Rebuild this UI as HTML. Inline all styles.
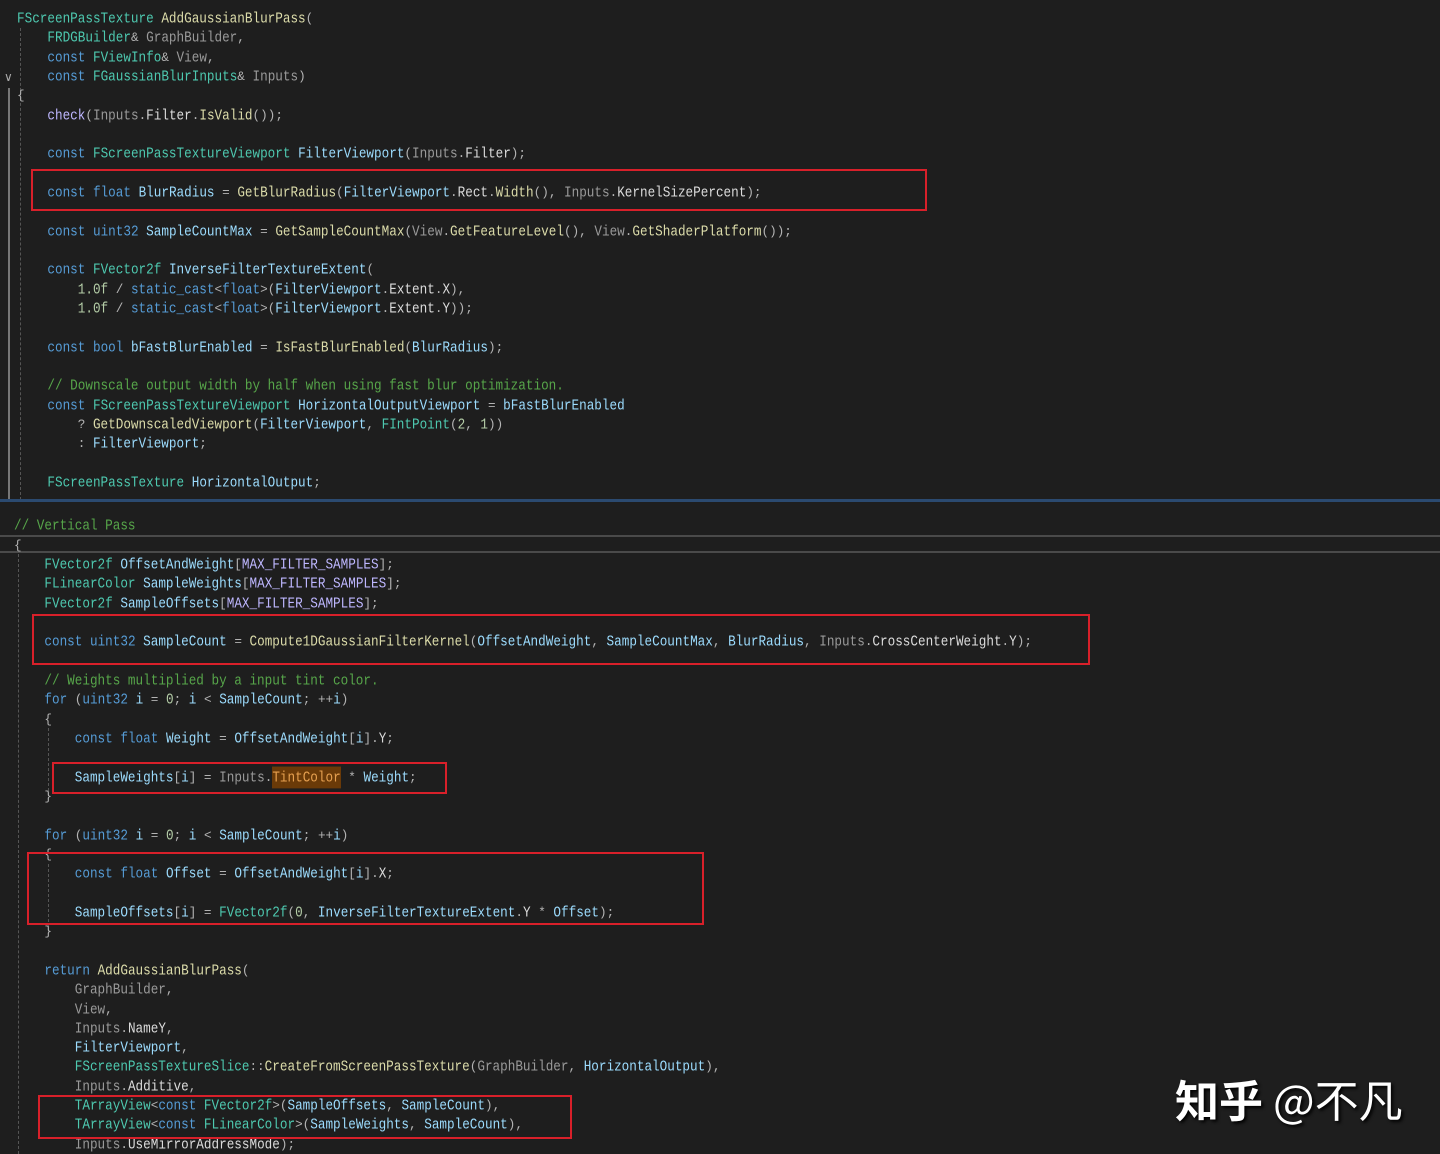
<!DOCTYPE html>
<html><head><meta charset="utf-8"><style>
html,body{margin:0;padding:0;background:#1e1e1e;width:1440px;height:1154px;overflow:hidden;position:relative}
pre{position:absolute;margin:0;font-family:"Liberation Mono",monospace;font-size:12.67px;line-height:19.33px;color:#b4b4b4;white-space:pre}
pre span{display:inline-block;transform:scaleY(1.15)}
.t{color:#4ec9b0}.k{color:#569cd6}.f{color:#dcdcaa}.v{color:#9cdcfe}.p{color:#9a9a9a}.c{color:#57a64a}.m{color:#beb7ff}.n{color:#b5cea8}.w{color:#dcdcdc}
.hl{background:#6a3a08;color:#e6a050}
.box{position:absolute;border:2px solid #d8202a;box-sizing:border-box}
.g{position:absolute;width:0;border-left:1px dashed #555}
.s{position:absolute;background:#888;width:2px}
</style></head><body>
<div class="s" style="left:8px;top:88px;height:412px;background:#777"></div>
<div class="g" style="left:20px;top:28px;height:472px"></div>
<div style="position:absolute;left:4px;top:70px;color:#aaa;font:12px 'Liberation Sans',sans-serif">&#8744;</div>
<div style="position:absolute;left:0;top:499px;width:1440px;height:3px;background:#2b4a70"></div>
<div style="position:absolute;left:0;top:535px;width:1440px;height:2px;background:#4a4a4a"></div>
<div style="position:absolute;left:0;top:551px;width:1440px;height:2px;background:#4a4a4a"></div>
<div class="g" style="left:18px;top:554px;height:600px"></div>
<div class="g" style="left:48px;top:728px;height:68px"></div>
<div class="g" style="left:48px;top:864px;height:68px"></div>
<pre style="left:17px;top:9px"><span class="t">FScreenPassTexture</span> <span class="f">AddGaussianBlurPass</span>(
    <span class="t">FRDGBuilder</span>&amp; <span class="p">GraphBuilder</span>,
    <span class="k">const</span> <span class="t">FViewInfo</span>&amp; <span class="p">View</span>,
    <span class="k">const</span> <span class="t">FGaussianBlurInputs</span>&amp; <span class="p">Inputs</span>)
{
    <span class="m">check</span>(<span class="p">Inputs</span>.<span class="w">Filter</span>.<span class="f">IsValid</span>());

    <span class="k">const</span> <span class="t">FScreenPassTextureViewport</span> <span class="v">FilterViewport</span>(<span class="p">Inputs</span>.<span class="w">Filter</span>);

    <span class="k">const</span> <span class="k">float</span> <span class="v">BlurRadius</span> = <span class="f">GetBlurRadius</span>(<span class="v">FilterViewport</span>.<span class="w">Rect</span>.<span class="f">Width</span>(), <span class="p">Inputs</span>.<span class="w">KernelSizePercent</span>);

    <span class="k">const</span> <span class="k">uint32</span> <span class="v">SampleCountMax</span> = <span class="f">GetSampleCountMax</span>(<span class="p">View</span>.<span class="f">GetFeatureLevel</span>(), <span class="p">View</span>.<span class="f">GetShaderPlatform</span>());

    <span class="k">const</span> <span class="t">FVector2f</span> <span class="v">InverseFilterTextureExtent</span>(
        <span class="n">1.0f</span> / <span class="k">static_cast</span>&lt;<span class="k">float</span>&gt;(<span class="v">FilterViewport</span>.<span class="w">Extent</span>.<span class="w">X</span>),
        <span class="n">1.0f</span> / <span class="k">static_cast</span>&lt;<span class="k">float</span>&gt;(<span class="v">FilterViewport</span>.<span class="w">Extent</span>.<span class="w">Y</span>));

    <span class="k">const</span> <span class="k">bool</span> <span class="v">bFastBlurEnabled</span> = <span class="f">IsFastBlurEnabled</span>(<span class="v">BlurRadius</span>);

    <span class="c">// Downscale output width by half when using fast blur optimization.</span>
    <span class="k">const</span> <span class="t">FScreenPassTextureViewport</span> <span class="v">HorizontalOutputViewport</span> = <span class="v">bFastBlurEnabled</span>
        ? <span class="f">GetDownscaledViewport</span>(<span class="v">FilterViewport</span>, <span class="t">FIntPoint</span>(<span class="n">2</span>, <span class="n">1</span>))
        : <span class="v">FilterViewport</span>;

    <span class="t">FScreenPassTexture</span> <span class="v">HorizontalOutput</span>;</pre>
<pre style="left:14px;top:516.3px"><span class="c">// Vertical Pass</span>
{
    <span class="t">FVector2f</span> <span class="v">OffsetAndWeight</span>[<span class="m">MAX_FILTER_SAMPLES</span>];
    <span class="t">FLinearColor</span> <span class="v">SampleWeights</span>[<span class="m">MAX_FILTER_SAMPLES</span>];
    <span class="t">FVector2f</span> <span class="v">SampleOffsets</span>[<span class="m">MAX_FILTER_SAMPLES</span>];

    <span class="k">const</span> <span class="k">uint32</span> <span class="v">SampleCount</span> = <span class="f">Compute1DGaussianFilterKernel</span>(<span class="v">OffsetAndWeight</span>, <span class="v">SampleCountMax</span>, <span class="v">BlurRadius</span>, <span class="p">Inputs</span>.<span class="w">CrossCenterWeight</span>.<span class="w">Y</span>);

    <span class="c">// Weights multiplied by a input tint color.</span>
    <span class="k">for</span> (<span class="k">uint32</span> <span class="v">i</span> = <span class="n">0</span>; <span class="v">i</span> &lt; <span class="v">SampleCount</span>; ++<span class="v">i</span>)
    {
        <span class="k">const</span> <span class="k">float</span> <span class="v">Weight</span> = <span class="v">OffsetAndWeight</span>[<span class="v">i</span>].<span class="w">Y</span>;

        <span class="v">SampleWeights</span>[<span class="v">i</span>] = <span class="p">Inputs</span>.<span class="hl">TintColor</span> * <span class="v">Weight</span>;
    }

    <span class="k">for</span> (<span class="k">uint32</span> <span class="v">i</span> = <span class="n">0</span>; <span class="v">i</span> &lt; <span class="v">SampleCount</span>; ++<span class="v">i</span>)
    {
        <span class="k">const</span> <span class="k">float</span> <span class="v">Offset</span> = <span class="v">OffsetAndWeight</span>[<span class="v">i</span>].<span class="w">X</span>;

        <span class="v">SampleOffsets</span>[<span class="v">i</span>] = <span class="t">FVector2f</span>(<span class="n">0</span>, <span class="v">InverseFilterTextureExtent</span>.<span class="w">Y</span> * <span class="v">Offset</span>);
    }

    <span class="k">return</span> <span class="f">AddGaussianBlurPass</span>(
        <span class="p">GraphBuilder</span>,
        <span class="p">View</span>,
        <span class="p">Inputs</span>.<span class="w">NameY</span>,
        <span class="v">FilterViewport</span>,
        <span class="t">FScreenPassTextureSlice</span>::<span class="f">CreateFromScreenPassTexture</span>(<span class="p">GraphBuilder</span>, <span class="v">HorizontalOutput</span>),
        <span class="p">Inputs</span>.<span class="w">Additive</span>,
        <span class="t">TArrayView</span>&lt;<span class="k">const</span> <span class="t">FVector2f</span>&gt;(<span class="v">SampleOffsets</span>, <span class="v">SampleCount</span>),
        <span class="t">TArrayView</span>&lt;<span class="k">const</span> <span class="t">FLinearColor</span>&gt;(<span class="v">SampleWeights</span>, <span class="v">SampleCount</span>),
        <span class="p">Inputs</span>.<span class="w">UseMirrorAddressMode</span>);</pre>
<div class="box" style="left:31px;top:169px;width:896px;height:42px"></div>
<div class="box" style="left:32px;top:614px;width:1058px;height:51px"></div>
<div class="box" style="left:52px;top:762px;width:395px;height:32px"></div>
<div class="box" style="left:27px;top:852px;width:677px;height:73px"></div>
<div class="box" style="left:38px;top:1095px;width:534px;height:44px"></div>
<div style="position:absolute;left:1175px;top:1066px;color:#fff;font:bold 44px 'Noto Sans CJK SC','WenQuanYi Zen Hei',sans-serif;text-shadow:2px 2px 3px #000;white-space:nowrap">知乎 <span style="font-weight:normal">@不凡</span></div>
</body></html>
